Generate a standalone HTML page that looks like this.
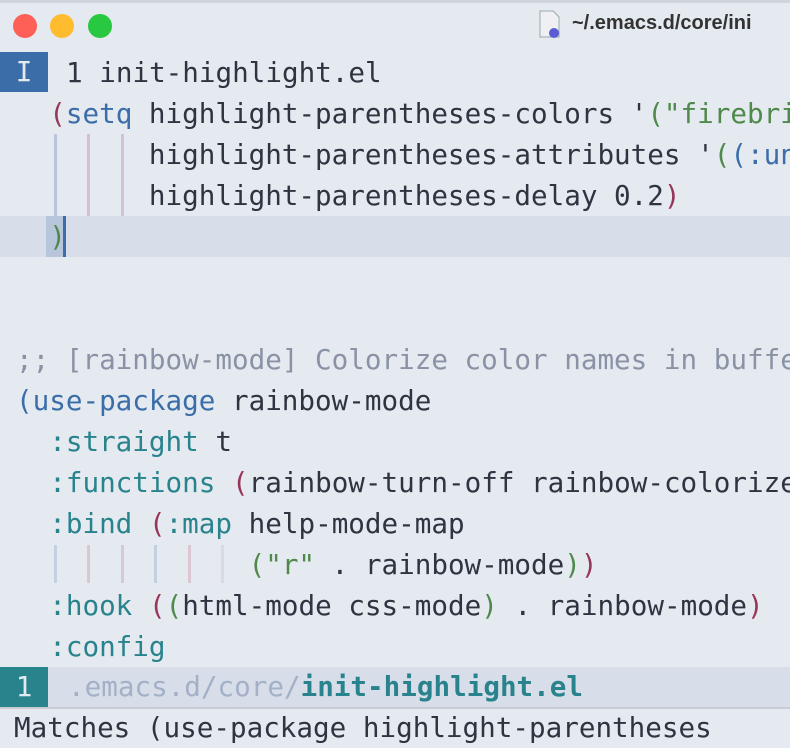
<!DOCTYPE html>
<html><head><style>
body{margin:0;width:790px;height:748px;overflow:hidden;background:#e5e9f0;font-family:"DejaVu Sans Mono",monospace;}
#w{position:absolute;left:0;top:0;width:790px;height:748px;overflow:hidden}
.ln{position:absolute;left:0;right:0;overflow:hidden;height:41px;line-height:41px;font-size:27.6px;color:#2e3440;white-space:pre;}
.t{left:16px}
.b{color:#3b6ea8}.k{color:#29838d}.r{color:#97365b}.g{color:#4f894c}.c{color:#8a93a5}
.bar{position:absolute;width:3px}
.dot{position:absolute;top:14px;width:24px;height:24px;border-radius:50%}
</style></head><body><div id="w">
<div style="position:absolute;left:0;top:0;width:790px;height:3px;background:#d0d4dc"></div>
<div class="dot" style="left:13px;background:#fe5f57"></div>
<div class="dot" style="left:50px;background:#febc2e"></div>
<div class="dot" style="left:88px;background:#28c840"></div>
<svg style="position:absolute;left:538px;top:9px" width="26" height="30" viewBox="0 0 26 30"><path d="M2 2h13l6 6v20H2z" fill="#f0f0f4" stroke="#9aa" stroke-width="1"/><circle cx="16" cy="24" r="5" fill="#5b5bd6"/></svg>
<div style="position:absolute;left:572px;top:12px;font:bold 20px 'Liberation Sans',sans-serif;color:#333;white-space:nowrap">~/.emacs.d/core/ini</div>

<div style="position:absolute;left:0;top:52px;width:48px;height:40px;background:#3b6ea8;color:#e5e9f0;font-size:27.6px;line-height:40px;text-align:center">I</div>
<div class="ln" style="left:66px;top:52px">1 init-highlight.el</div>
<div class="ln t" style="top:93px">  <span class="r">(</span><span class="b">setq</span> highlight-parentheses-colors '<span class="g">("firebrick</span></div>
<div class="ln t" style="top:134px">        highlight-parentheses-attributes '<span class="g">(</span><span class="b">(:und</span></div>
<div class="ln t" style="top:175px">        highlight-parentheses-delay 0.2<span class="r">)</span></div>
<div style="position:absolute;left:0;top:216px;width:790px;height:41px;background:#d8dee9"></div>
<div style="position:absolute;left:46px;top:216px;width:17px;height:41px;background:#b8c6db"></div>
<div style="position:absolute;left:63px;top:216px;width:3px;height:41px;background:#3b6ea8"></div>
<div class="ln t" style="top:216px">  <span class="g">)</span></div>
<div class="bar" style="left:54px;top:134px;height:82px;background:#b8c6db"></div>
<div class="bar" style="left:87px;top:134px;height:82px;background:#d7bfd0"></div>
<div class="bar" style="left:121px;top:134px;height:82px;background:#d3c0da"></div>

<div class="ln t" style="top:339px"><span class="c">;; [rainbow-mode] Colorize color names in buffer</span></div>
<div class="ln t" style="top:380px"><span class="b">(use-package</span> rainbow-mode</div>
<div class="ln t" style="top:421px">  <span class="k">:straight</span> t</div>
<div class="ln t" style="top:462px">  <span class="k">:functions</span> <span class="r">(</span>rainbow-turn-off rainbow-colorize</div>
<div class="ln t" style="top:503px">  <span class="k">:bind</span> <span class="r">(</span><span class="k">:map</span> help-mode-map</div>
<div class="ln t" style="top:544px">              <span class="g">("r"</span> . rainbow-mode<span class="g">)</span><span class="r">)</span></div>
<div class="bar" style="left:54px;top:545px;height:38px;background:#c3d0e2"></div>
<div class="bar" style="left:87px;top:545px;height:38px;background:#dcc6d4"></div>
<div class="bar" style="left:121px;top:545px;height:38px;background:#d8c8de"></div>
<div class="bar" style="left:154px;top:545px;height:38px;background:#c3d0e2"></div>
<div class="bar" style="left:188px;top:545px;height:38px;background:#dcc6d4"></div>
<div class="bar" style="left:221px;top:545px;height:38px;background:#d8d8e6"></div>
<div class="ln t" style="top:585px">  <span class="k">:hook</span> <span class="r">(</span><span class="g">(</span>html-mode css-mode<span class="g">)</span> . rainbow-mode<span class="r">)</span></div>
<div class="ln t" style="top:626px">  <span class="k">:config</span></div>

<div style="position:absolute;left:0;top:667px;width:790px;height:40px;background:#d8dee9"></div>
<div style="position:absolute;left:0;top:667px;width:48px;height:40px;background:#29838d;color:#e5e9f0;font-size:27.6px;line-height:40px;text-align:center">1</div>
<div class="ln" style="left:68px;top:667px;height:40px;line-height:40px"><span style="color:#a3b0c6">.emacs.d/core/</span><b class="k">init-highlight.el</b></div>
<div style="position:absolute;left:0;top:707px;width:790px;height:2px;background:#c8ccd4"></div>
<div class="ln" style="left:14px;top:708px;height:40px;line-height:40px">Matches (use-package highlight-parentheses</div>
</div></body></html>
